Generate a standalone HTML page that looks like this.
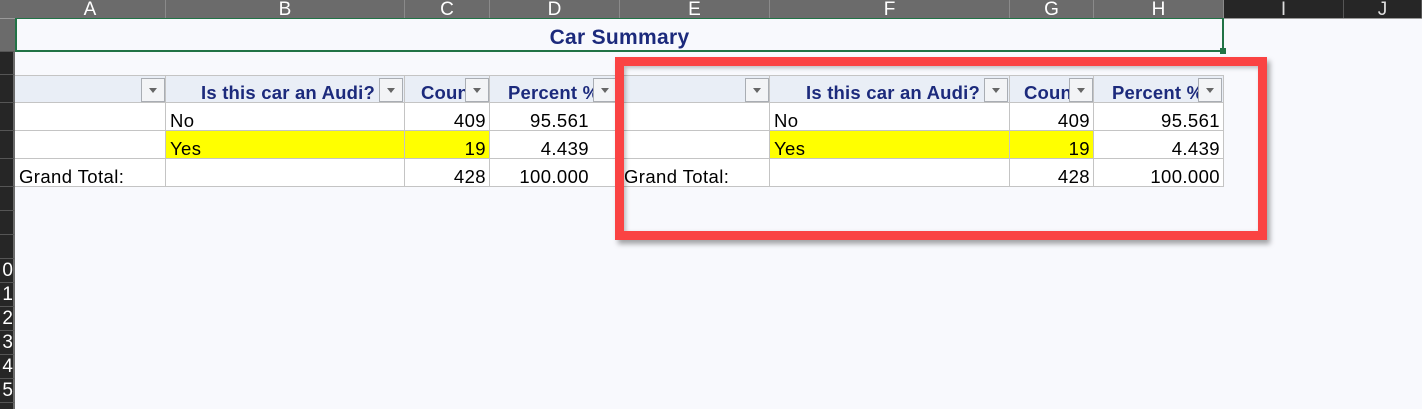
<!DOCTYPE html>
<html><head><meta charset="utf-8"><style>
*{margin:0;padding:0;box-sizing:border-box}
html,body{width:1422px;height:409px;overflow:hidden}
body{background:#f8f9fd;position:relative;font-family:"Liberation Sans",Arial,sans-serif}
.a{position:absolute}
.ch{position:absolute;top:0;height:18px;background:#6b6b6b;color:#fff;font-size:19px;text-align:center;line-height:19px;border-right:1px solid #8a8a8a;overflow:hidden}
.chd{background:#262626;border-right:1px solid #555;color:#ddd}
.rh{position:absolute;left:0;width:15px;background:#262626;border-bottom:1px solid #555;border-right:2px solid #6b6b6b;color:#fff;font-size:19px;overflow:hidden;text-align:right;line-height:23px;text-indent:-6px}
.c{position:absolute;border-right:1px solid #c4c4c4;border-bottom:1px solid #c4c4c4;background:#fff;font-size:18.5px;letter-spacing:0.4px;color:#000;line-height:35px;white-space:nowrap;overflow:hidden}
.h{background:#e9eef6;color:#1c2a7c;font-weight:bold;font-size:18.5px;letter-spacing:0.2px;line-height:33px}
.y{background:#ffff00}
.r{text-align:right;padding-right:3px}
.l{padding-left:4px}
.btn{position:absolute;width:24px;height:24px;background:#f3f4f6;border:1px solid #a9adb3;top:2px}
.btn:after{content:"";position:absolute;left:7px;top:9px;border-left:4px solid transparent;border-right:4px solid transparent;border-top:5px solid #666}
</style></head><body>
<div class="a" style="left:0;top:0;width:15px;height:18px;background:#6b6b6b"></div>
<div class="ch" style="left:15px;width:151px">A</div>
<div class="ch" style="left:166px;width:239px">B</div>
<div class="ch" style="left:405px;width:85px">C</div>
<div class="ch" style="left:490px;width:130px">D</div>
<div class="ch" style="left:620px;width:150px">E</div>
<div class="ch" style="left:770px;width:240px">F</div>
<div class="ch" style="left:1010px;width:84px">G</div>
<div class="ch" style="left:1094px;width:130px">H</div>
<div class="ch chd" style="left:1224px;width:120px">I</div>
<div class="ch chd" style="left:1344px;width:78px">J</div>
<div class="a" style="left:0;top:18px;width:1422px;height:1px;background:#9a9a9a"></div>
<div class="rh" style="top:19px;height:33px;background:#6b6b6b"></div>
<div class="rh" style="top:52px;height:23px"></div>
<div class="rh" style="top:75px;height:28px"></div>
<div class="rh" style="top:103px;height:28px"></div>
<div class="rh" style="top:131px;height:28px"></div>
<div class="rh" style="top:159px;height:28px"></div>
<div class="rh" style="top:187px;height:24px"></div>
<div class="rh" style="top:211px;height:24px"></div>
<div class="rh" style="top:235px;height:24px"></div>
<div class="rh" style="top:259px;height:24px">0</div>
<div class="rh" style="top:283px;height:24px">1</div>
<div class="rh" style="top:307px;height:24px">2</div>
<div class="rh" style="top:331px;height:24px">3</div>
<div class="rh" style="top:355px;height:24px">4</div>
<div class="rh" style="top:379px;height:24px">5</div>
<div class="rh" style="top:403px;height:24px"></div>
<div class="a" style="left:15px;top:18px;width:1209px;height:34px;border:2px solid #217346;border-top:1px solid #217346;color:#1c2a7c;font-weight:bold;font-size:21px;letter-spacing:0.3px;text-align:center;line-height:38px">Car Summary</div>
<div class="a" style="left:1220px;top:48px;width:6px;height:6px;background:#217346"></div>
<!-- table 1 -->
<div class="a" style="left:15px;top:75px;width:605px;height:1px;background:#c4c4c4"></div>
<div class="c h" style="left:15px;top:76px;width:151px;height:27px"><div class="btn" style="left:126px"></div></div>
<div class="c h r" style="left:166px;top:76px;width:239px;height:27px;padding-right:29px">Is this car an Audi?<div class="btn" style="left:213px"></div></div>
<div class="c h" style="left:405px;top:76px;width:85px;height:27px;padding-left:16px">Count<div class="btn" style="left:60px"></div></div>
<div class="c h" style="left:490px;top:76px;width:130px;height:27px;padding-left:18px">Percent %<div class="btn" style="left:103px"></div></div>
<div class="c" style="left:15px;top:103px;width:151px;height:28px"></div>
<div class="c l" style="left:166px;top:103px;width:239px;height:28px">No</div>
<div class="c r" style="left:405px;top:103px;width:85px;height:28px">409</div>
<div class="c r" style="left:490px;top:103px;width:130px;height:28px;padding-right:30px">95.561</div>
<div class="c" style="left:15px;top:131px;width:151px;height:28px"></div>
<div class="c l y" style="left:166px;top:131px;width:239px;height:28px">Yes</div>
<div class="c r y" style="left:405px;top:131px;width:85px;height:28px">19</div>
<div class="c r" style="left:490px;top:131px;width:130px;height:28px;padding-right:30px">4.439</div>
<div class="c" style="left:15px;top:159px;width:151px;height:28px;padding-left:4px">Grand Total:</div>
<div class="c" style="left:166px;top:159px;width:239px;height:28px"></div>
<div class="c r" style="left:405px;top:159px;width:85px;height:28px">428</div>
<div class="c r" style="left:490px;top:159px;width:130px;height:28px;padding-right:30px">100.000</div>
<!-- table 2 -->
<div class="a" style="left:620px;top:75px;width:604px;height:1px;background:#c4c4c4"></div>
<div class="c h" style="left:620px;top:76px;width:150px;height:27px"><div class="btn" style="left:125px"></div></div>
<div class="c h r" style="left:770px;top:76px;width:240px;height:27px;padding-right:29px">Is this car an Audi?<div class="btn" style="left:214px"></div></div>
<div class="c h" style="left:1010px;top:76px;width:84px;height:27px;padding-left:14px">Count<div class="btn" style="left:59px"></div></div>
<div class="c h" style="left:1094px;top:76px;width:130px;height:27px;padding-left:18px">Percent %<div class="btn" style="left:104px"></div></div>
<div class="c" style="left:620px;top:103px;width:150px;height:28px"></div>
<div class="c l" style="left:770px;top:103px;width:240px;height:28px">No</div>
<div class="c r" style="left:1010px;top:103px;width:84px;height:28px">409</div>
<div class="c r" style="left:1094px;top:103px;width:130px;height:28px">95.561</div>
<div class="c" style="left:620px;top:131px;width:150px;height:28px"></div>
<div class="c l y" style="left:770px;top:131px;width:240px;height:28px">Yes</div>
<div class="c r y" style="left:1010px;top:131px;width:84px;height:28px">19</div>
<div class="c r" style="left:1094px;top:131px;width:130px;height:28px">4.439</div>
<div class="c" style="left:620px;top:159px;width:150px;height:28px;padding-left:4px">Grand Total:</div>
<div class="c" style="left:770px;top:159px;width:240px;height:28px"></div>
<div class="c r" style="left:1010px;top:159px;width:84px;height:28px">428</div>
<div class="c r" style="left:1094px;top:159px;width:130px;height:28px">100.000</div>
<div class="a" style="left:615px;top:57px;width:652px;height:183px;border:9px solid #fa4343;box-shadow:3px 4px 5px rgba(0,0,0,0.35), inset 2px 2px 4px rgba(0,0,0,0.25)"></div>
</body></html>
